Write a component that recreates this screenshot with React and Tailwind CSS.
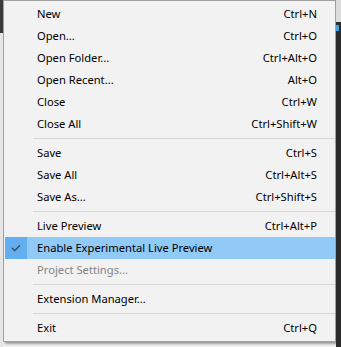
import React from "react";

const groups = [
  [
    ["New", "Ctrl+N"],
    ["Open...", "Ctrl+O"],
    ["Open Folder...", "Ctrl+Alt+O"],
    ["Open Recent...", "Alt+O"],
    ["Close", "Ctrl+W"],
    ["Close All", "Ctrl+Shift+W"],
  ],
  [
    ["Save", "Ctrl+S"],
    ["Save All", "Ctrl+Alt+S"],
    ["Save As...", "Ctrl+Shift+S"],
  ],
  [
    ["Live Preview", "Ctrl+Alt+P"],
    ["Enable Experimental Live Preview", "", "checked"],
    ["Project Settings...", "", "disabled"],
  ],
  [["Extension Manager..."]],
  [["Exit", "Ctrl+Q"]],
];

function Item({ label, shortcut, state }) {
  const checked = state === "checked";
  const disabled = state === "disabled";
  return (
    <div
      className={`flex h-[22px] items-center ${checked ? "bg-[#91c9f7]" : ""}`}
    >
      <div
        className={`flex h-full w-[22px] items-center justify-center ${checked ? "bg-[#62aef0]" : ""}`}
      >
        {checked && (
          <svg width="10" height="8" viewBox="0 0 10 8">
            <path d="M1 4 L3.8 6.6 L9 1.2" fill="none" stroke="#3b4650" strokeWidth="1.3" />
          </svg>
        )}
      </div>
      <div
        className={`ml-[10px] flex-1 leading-none ${disabled ? "text-[#838383]" : "text-black"}`}
      >
        {label}
      </div>
      <div className="mr-[18px] leading-none text-black">{shortcut}</div>
    </div>
  );
}

export default function App() {
  return (
    <div
      className="relative flex h-[347px] w-[341px] overflow-hidden bg-[#f0f0f0] text-[11.2px]"
      style={{ fontFamily: '"Noto Sans", sans-serif' }}
    >
      <div className="flex w-[3px] flex-col">
        <div className="h-[33px] bg-[#3a3a3a]" />
        <div className="flex-1 bg-[#e6e6e6]" />
      </div>
      <div className="flex h-[343px] flex-col">
        <div className="w-[333px] border border-[#a0a0a0] bg-[#f2f2f2] pb-[2px] pl-[1px] pt-[2px] shadow-[2px_2px_2px_rgba(0,0,0,0.35)]">
          {groups.map((g, gi) => (
            <div key={gi}>
              {gi > 0 && (
                <div className="flex h-[7px] items-center pl-[28px]">
                  <div className="h-px flex-1 bg-[#d7d7d7]" />
                </div>
              )}
              {g.map(([l, s, st]) => (
                <Item key={l} label={l} shortcut={s} state={st} />
              ))}
            </div>
          ))}
        </div>
      </div>
      <div className="flex flex-1 flex-col bg-[#2b2b2b]">
        <div className="h-[22px] bg-[#dcdcdc]" />
        <div className="mt-[3px] h-[6px] w-[3px] bg-[#4aa3df]" />
      </div>
    </div>
  );
}
